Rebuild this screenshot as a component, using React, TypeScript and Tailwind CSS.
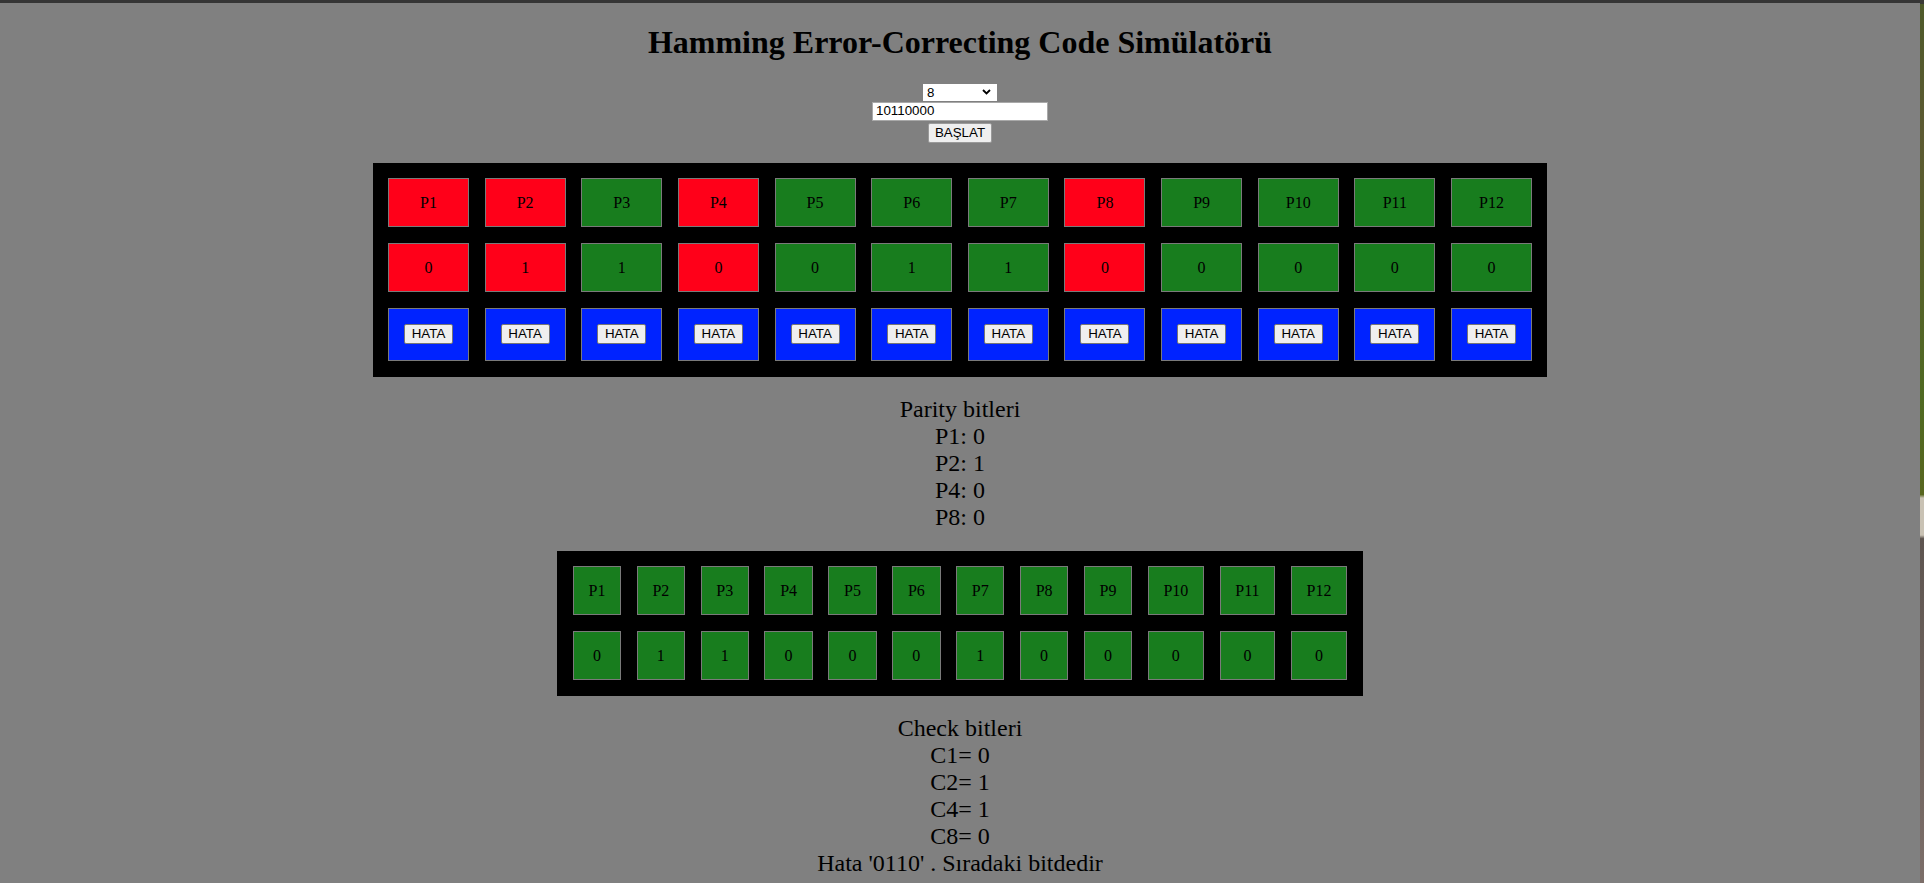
import React from "react";

const encoded = ["0", "1", "1", "0", "0", "1", "1", "0", "0", "0", "0", "0"];
const received = ["0", "1", "1", "0", "0", "0", "1", "0", "0", "0", "0", "0"];
const parityPos = [1, 2, 4, 8];

function Cell({ parity, children }: { parity: boolean; children: React.ReactNode }) {
  return (
    <div
      className={
        "h-[49px] flex items-center justify-center border border-[#7a7a7a] text-[16px] leading-[18px] " +
        (parity ? "bg-[#ff0019]" : "bg-[#187d1e]")
      }
    >
      {children}
    </div>
  );
}

export default function App() {
  const positions = Array.from({ length: 12 }, (_, i) => i + 1);

  return (
    <div className="flex w-[1924px] h-[883px] overflow-hidden">
      <div className="w-[1920px] shrink-0 bg-[#808080] flex flex-col text-black text-center font-['Liberation_Serif',serif]">
        <div className="h-[3px] bg-[#353535] shrink-0" />

        <h1 className="mt-[21px] mb-[21px] text-[32px] leading-[37px] font-bold">
          Hamming Error-Correcting Code Simülatörü
        </h1>

        {/* form */}
        <div className="flex flex-col items-center font-['Liberation_Sans',Arial,sans-serif] text-[13.33px]">
          <div className="relative mt-[1px] w-[74px] h-[17px]">
            <select
              defaultValue="8"
              className="appearance-none w-full h-full bg-white pl-[4px] text-left leading-[17px] outline-none"
            >
              <option value="4">4</option>
              <option value="8">8</option>
              <option value="16">16</option>
            </select>
            <svg
              className="absolute right-[6px] top-[6px] pointer-events-none"
              width="9"
              height="6"
              viewBox="0 0 9 6"
            >
              <path d="M1 1l3.5 3.5L8 1" fill="none" stroke="#000" strokeWidth="1.8" />
            </svg>
          </div>
          <input
            defaultValue="10110000"
            className="mt-[1.5px] w-[176px] h-[19px] bg-white pl-[3px] border border-[#a9a9a9] outline-none"
          />
          <button className="mt-[2px] w-[64px] h-[20px] bg-[#efefef] border border-[#9a9a9a] rounded-[2px] leading-[18px]">
            BAŞLAT
          </button>
        </div>

        {/* encoded table */}
        <div className="mt-[20px] mx-auto w-[1174px] bg-black pt-[15.5px] pb-[16.5px] px-[15px]">
          <div className="grid grid-cols-12 gap-x-[15.6px] gap-y-[16px]">
            {positions.map((p) => (
              <Cell key={"h" + p} parity={parityPos.includes(p)}>
                P{p}
              </Cell>
            ))}
            {positions.map((p) => (
              <Cell key={"v" + p} parity={parityPos.includes(p)}>
                {encoded[p - 1]}
              </Cell>
            ))}
            {positions.map((p) => (
              <div
                key={"b" + p}
                className="h-[52.7px] flex items-center justify-center bg-[#0023ff] border border-[#7a7a7a]"
              >
                <button className="w-[49px] h-[20px] bg-[#efefef] border border-[#767676] rounded-[2px] font-['Liberation_Sans',Arial,sans-serif] text-[13.33px] leading-[18px]">
                  HATA
                </button>
              </div>
            ))}
          </div>
        </div>

        <div className="mt-[19px] text-[24px] leading-[27px]">
          <div>Parity bitleri</div>
          <div>P1: 0</div>
          <div>P2: 1</div>
          <div>P4: 0</div>
          <div>P8: 0</div>
        </div>

        {/* received table */}
        <div className="mt-[19.5px] mx-auto bg-black p-[15.5px]">
          <div className="flex flex-col gap-y-[16px]">
            <div className="flex gap-x-[15.6px]">
              {positions.map((p) => (
                <div
                  key={"rh" + p}
                  className="h-[49px] px-[14.7px] flex items-center justify-center bg-[#187d1e] border border-[#7a7a7a] text-[16px] leading-[18px]"
                >
                  P{p}
                </div>
              ))}
            </div>
            <div className="flex gap-x-[15.6px]">
              {positions.map((p) => (
                <div
                  key={"rv" + p}
                  className="relative h-[49px] px-[14.7px] flex items-center justify-center bg-[#187d1e] border border-[#7a7a7a] text-[16px] leading-[18px]"
                >
                  <span className="invisible">P{p}</span>
                  <span className="absolute">{received[p - 1]}</span>
                </div>
              ))}
            </div>
          </div>
        </div>

        <div className="mt-[19px] text-[24px] leading-[27px]">
          <div>Check bitleri</div>
          <div>C1= 0</div>
          <div>C2= 1</div>
          <div>C4= 1</div>
          <div>C8= 0</div>
          <div>Hata '0110' . Sıradaki bitdedir</div>
        </div>
      </div>

      {/* sliver of desktop behind the window */}
      <div className="w-[4px] shrink-0 bg-[linear-gradient(to_bottom,#3a3a36_0%,#3a3a36_0.4%,#4e5a2a_0.5%,#5c5a32_15%,#56602a_30%,#4f6a22_45%,#58661f_56%,#c9c2b4_56.4%,#c9c2b4_60.6%,#5e5550_61%,#6d615c_80%,#7c6e69_100%)]" />
    </div>
  );
}
